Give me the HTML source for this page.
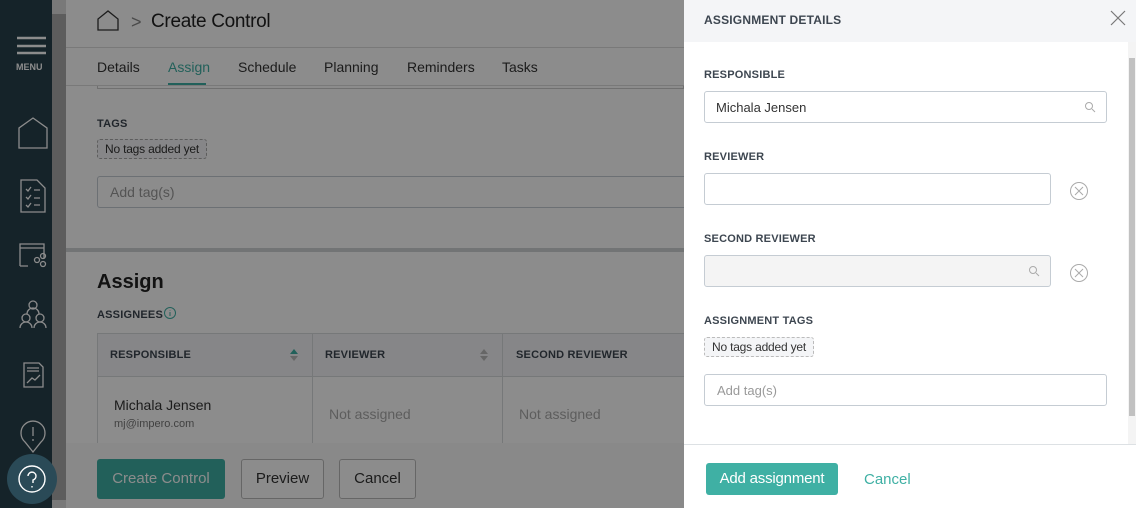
<!DOCTYPE html>
<html><head><style>
*{box-sizing:border-box;margin:0;padding:0}
body{width:1136px;height:508px;overflow:hidden;font-family:"Liberation Sans",sans-serif;position:relative;background:#fff}
.a{position:absolute}
.lbl{font-size:11px;font-weight:bold;color:#3d4650;letter-spacing:.2px}
.inp{border:1px solid #c5ccd3;border-radius:3px;background:#fff}
</style></head><body>
<div class="a" style="left:0;top:0;width:52px;height:508px;background:#27404c"></div>
<div class="a" style="left:52px;top:0;width:14px;height:508px;background:#ddd"></div>
<div class="a" style="left:52px;top:14px;width:14px;height:486px;background:#aaa"></div>
<div class="a" style="left:66px;top:0;width:618px;height:508px;background:#fff"></div>
<svg class="a" style="left:0;top:0" width="66" height="508" fill="none" stroke="#fff" stroke-width="1.3">
<path d="M17 38h29M17 46h29M17 53h29" stroke-width="2.5"/>
<path d="M19 148v-20l14-10 14 10v20z"/>
<path d="M21 180h16l8 8v24h-24z M26 189l2 2 3-4M26 197l2 2 3-4M26 205l2 2 3-4M34 190h6M34 198h6M34 205h6"/>
<path d="M20 266v-22h24v14M20 248h24M20 266h8"/><circle cx="37" cy="260" r="2.5"/><circle cx="43" cy="256" r="2.5"/><circle cx="43" cy="264" r="2.5"/>
<circle cx="33" cy="305" r="4"/><circle cx="26" cy="318" r="4"/><circle cx="40" cy="318" r="4"/><path d="M20 328a6 6 0 0 1 12 0M34 328a6 6 0 0 1 12 0M27 314a6 6 0 0 1 12 0"/>
<path d="M24 363h15l4 4v20h-19z M27 368h12M27 371h12M27 383l5-5 3 2 5-5"/>
<path d="M33 452l-8-10a12 12 0 1 1 16 0z M33 427v9M33 439v2"/>
</svg>
<div class="a" style="left:16px;top:62px;font-size:9px;font-weight:bold;color:#fff">MENU</div>
<svg class="a" style="left:96px;top:9px" width="26" height="24" fill="none" stroke="#333" stroke-width="1.3"><path d="M2 21V10L12 2l10 8v11z"/></svg>
<div class="a" style="left:131px;top:12px;font-size:18px;color:#888">&gt;</div>
<div class="a" style="left:151px;top:11px;font-size:19px;color:#222;letter-spacing:-.3px">Create Control</div>
<div class="a" style="left:66px;top:47px;width:618px;height:1px;background:#ddd"></div>
<div class="a" style="left:97px;top:59px;font-size:14px;color:#333">Details</div>
<div class="a" style="left:168px;top:59px;font-size:14px;color:#3fb0a4">Assign</div>
<div class="a" style="left:168px;top:83px;width:38px;height:2px;background:#3fb0a4"></div>
<div class="a" style="left:238px;top:59px;font-size:14px;color:#333">Schedule</div>
<div class="a" style="left:324px;top:59px;font-size:14px;color:#333">Planning</div>
<div class="a" style="left:407px;top:59px;font-size:14px;color:#333">Reminders</div>
<div class="a" style="left:502px;top:59px;font-size:14px;color:#333">Tasks</div>
<div class="a" style="left:66px;top:85px;width:618px;height:1px;background:#ddd"></div>
<div class="a" style="left:97px;top:86px;width:587px;height:3px;border:1px solid #ccc;border-top:0"></div>
<div class="a lbl" style="left:97px;top:118px">TAGS</div>
<div class="a" style="left:97px;top:139px;border:1px dashed #aaa;border-radius:3px;background:#f4f5f7;font-size:12px;padding:2px 7px;color:#333;letter-spacing:-.2px">No tags added yet</div>
<div class="a inp" style="left:97px;top:176px;width:600px;height:32px;font-size:14px;color:#999;padding:7px 12px">Add tag(s)</div>
<div class="a" style="left:66px;top:248px;width:618px;height:4px;background:#d0d3d6"></div>
<div class="a" style="left:97px;top:271px;font-size:20px;font-weight:bold;color:#222">Assign</div>
<div class="a lbl" style="left:97px;top:309px">ASSIGNEES</div>
<svg class="a" style="left:163px;top:306px" width="14" height="14" fill="none" stroke="#3fb0a4"><circle cx="7" cy="7" r="5.5"/><path d="M7 6v4M7 4v.5"/></svg>
<div class="a" style="left:97px;top:333px;width:600px;height:44px;background:#f4f5f7;border:1px solid #d7dadd"></div>
<div class="a" style="left:97px;top:377px;width:600px;height:70px;border:1px solid #d7dadd;border-top:0"></div>
<div class="a" style="left:312px;top:333px;width:1px;height:114px;background:#d7dadd"></div>
<div class="a" style="left:502px;top:333px;width:1px;height:114px;background:#d7dadd"></div>
<div class="a lbl" style="left:110px;top:349px">RESPONSIBLE</div>
<div class="a lbl" style="left:325px;top:349px">REVIEWER</div>
<div class="a lbl" style="left:516px;top:349px">SECOND REVIEWER</div>
<svg class="a" style="left:289px;top:348px" width="10" height="14"><path d="M1 6l4-5 4 5z" fill="#3fb0a4"/><path d="M1 8l4 5 4-5z" fill="#bbb"/></svg>
<svg class="a" style="left:479px;top:348px" width="10" height="14"><path d="M1 6l4-5 4 5z" fill="#bbb"/><path d="M1 8l4 5 4-5z" fill="#bbb"/></svg>
<div class="a" style="left:114px;top:397px;font-size:14px;color:#333">Michala Jensen</div>
<div class="a" style="left:114px;top:418px;font-size:11px;color:#777">mj@impero.com</div>
<div class="a" style="left:329px;top:406px;font-size:14px;color:#aaa">Not assigned</div>
<div class="a" style="left:519px;top:406px;font-size:14px;color:#aaa">Not assigned</div>
<div class="a" style="left:66px;top:443px;width:618px;height:65px;background:#fafafa"></div>
<div class="a" style="left:97px;top:459px;width:128px;height:40px;background:#3fb0a4;border-radius:3px;color:#fff;font-size:15px;text-align:center;line-height:40px">Create Control</div>
<div class="a" style="left:241px;top:459px;width:83px;height:40px;border:1px solid #bbb;border-radius:3px;color:#333;font-size:15px;text-align:center;line-height:38px;background:#fff">Preview</div>
<div class="a" style="left:339px;top:459px;width:77px;height:40px;border:1px solid #bbb;border-radius:3px;color:#333;font-size:15px;text-align:center;line-height:38px;background:#fff">Cancel</div>
<div class="a" style="left:52px;top:0;width:632px;height:508px;background:rgba(0,0,0,.45)"></div>
<div class="a" style="left:0;top:0;width:52px;height:508px;background:rgba(0,0,0,.45)"></div>
<div class="a" style="left:7px;top:454px;width:50px;height:50px;border-radius:50%;background:#2a4a57"></div>
<svg class="a" style="left:7px;top:454px" width="50" height="50" fill="none" stroke="#fff" stroke-width="1.4"><circle cx="25" cy="25" r="13"/><path d="M21 22a4 4 0 1 1 5 4v3M25 32v1.5"/></svg>
<div class="a" style="left:684px;top:0;width:452px;height:508px;background:#fff"></div>
<div class="a" style="left:684px;top:0;width:452px;height:42px;background:#f4f5f7"></div>
<div class="a lbl" style="left:704px;top:13px;font-size:12px">ASSIGNMENT DETAILS</div>
<svg class="a" style="left:1110px;top:10px" width="16" height="16" stroke="#777" stroke-width="1.2"><path d="M1 1l14 14M15 1L1 15"/></svg>
<div class="a" style="left:1128px;top:42px;width:8px;height:402px;background:#f4f4f4"></div>
<div class="a" style="left:1129px;top:58px;width:6px;height:358px;background:#c1c1c1"></div>
<div class="a lbl" style="left:704px;top:69px">RESPONSIBLE</div>
<div class="a inp" style="left:704px;top:91px;width:403px;height:32px;font-size:13px;color:#333;padding:8px 11px">Michala Jensen</div>
<div class="a lbl" style="left:704px;top:151px">REVIEWER</div>
<div class="a inp" style="left:704px;top:173px;width:347px;height:32px"></div>
<div class="a lbl" style="left:704px;top:233px">SECOND REVIEWER</div>
<div class="a inp" style="left:704px;top:255px;width:347px;height:32px;background:#f4f4f4"></div>
<svg class="a" style="left:0;top:0" width="1136" height="300" fill="none" stroke="#aaa" stroke-width="1"><circle cx="1089" cy="106" r="3.5"/><path d="M1092 109l3 3"/><circle cx="1033" cy="270" r="3.5"/><path d="M1036 273l3 3"/><circle cx="1079" cy="191" r="8.5"/><path d="M1075 187l8 8M1083 187l-8 8"/><circle cx="1079" cy="273" r="8.5"/><path d="M1075 269l8 8M1083 269l-8 8"/></svg>
<div class="a lbl" style="left:704px;top:315px">ASSIGNMENT TAGS</div>
<div class="a" style="left:704px;top:337px;border:1px dashed #bbb;border-radius:3px;background:#f4f5f7;font-size:12px;padding:2px 7px;color:#333;letter-spacing:-.2px">No tags added yet</div>
<div class="a inp" style="left:704px;top:374px;width:403px;height:32px;font-size:13px;color:#999;padding:8px 12px">Add tag(s)</div>
<div class="a" style="left:684px;top:444px;width:452px;height:1px;background:#dde1e4"></div>
<div class="a" style="left:706px;top:463px;width:132px;height:32px;background:#3fb0a4;border-radius:3px;color:#fff;font-size:15px;text-align:center;line-height:32px;letter-spacing:-.2px">Add assignment</div>
<div class="a" style="left:864px;top:471px;font-size:15px;color:#3fb0a4">Cancel</div>
</body></html>
